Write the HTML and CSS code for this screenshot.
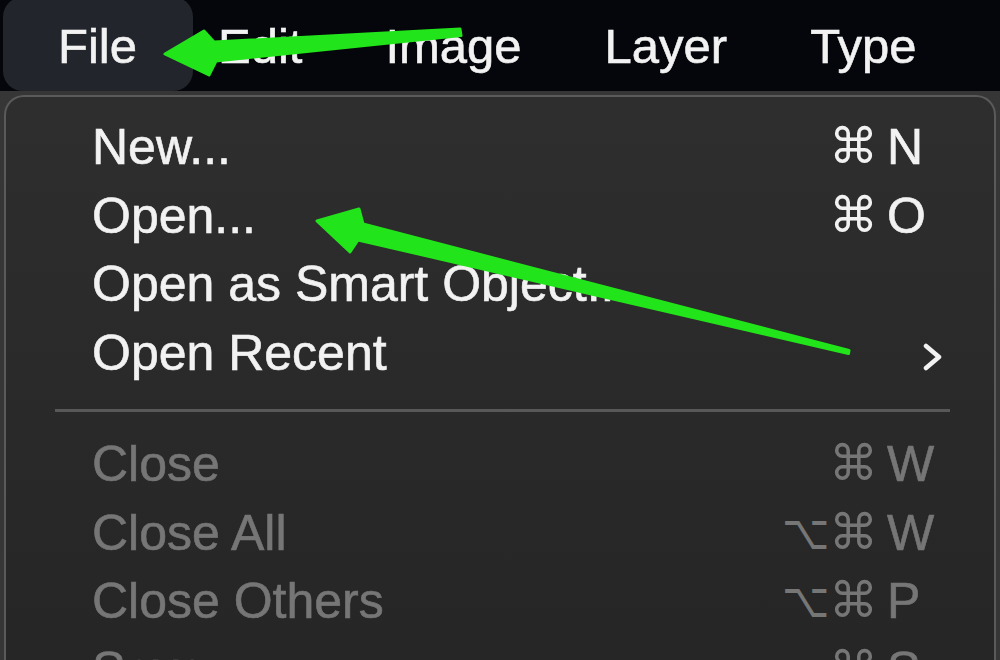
FILE: index.html
```html
<!DOCTYPE html>
<html lang="en">
<head>
<meta charset="utf-8">
<title>File menu</title>
<link rel="stylesheet" href="styles.css">
</head>
<body>
<div class="screen">
  <nav class="menubar">
    <span class="menu-title active">File</span>
    <span class="menu-title">Edit</span>
    <span class="menu-title">Image</span>
    <span class="menu-title">Layer</span>
    <span class="menu-title">Type</span>
  </nav>
  <div class="dropdown">
    <div class="item"><span class="label">New...</span><span class="mods">⌘</span><span class="key">N</span></div>
    <div class="item"><span class="label">Open...</span><span class="mods">⌘</span><span class="key">O</span></div>
    <div class="item"><span class="label">Open as Smart Object...</span><span class="mods"></span><span class="key"></span></div>
    <div class="item"><span class="label">Open Recent</span><span class="mods"></span><span class="key"><svg class="chevron" width="20" height="28" viewBox="0 0 20 28"><polyline points="3,3 16,14 3,25" fill="none" stroke="#f2f2f2" stroke-width="4.5" stroke-linecap="round" stroke-linejoin="round"/></svg></span></div>
    <div class="separator"></div>
    <div class="item disabled"><span class="label">Close</span><span class="mods">⌘</span><span class="key">W</span></div>
    <div class="item disabled"><span class="label">Close All</span><span class="mods"><span class="opt">⌥</span>⌘</span><span class="key">W</span></div>
    <div class="item disabled"><span class="label">Close Others</span><span class="mods"><span class="opt">⌥</span>⌘</span><span class="key">P</span></div>
    <div class="item disabled"><span class="label">Save</span><span class="mods">⌘</span><span class="key">S</span></div>
  </div>
  <svg class="annotations" width="1000" height="660" viewBox="0 0 1000 660">
    <polygon points="165,54 204,31 214,42 460,29 461,35.5 216,61 209,75" fill="#22e41a" stroke="#22e41a" stroke-width="3" stroke-linejoin="round"/>
    <polygon points="317,221 359,209 363,224 849,350.5 848.5,353.5 358,240 350,252" fill="#22e41a" stroke="#22e41a" stroke-width="3" stroke-linejoin="round"/>
  </svg>
</div>
</body>
</html>
```
FILE: styles.css
```css
html, body {
  margin: 0;
  padding: 0;
}
body {
  background: #3a3a3a;
  font-family: "Liberation Sans", Arial, sans-serif;
  overflow: hidden;
}
.screen {
  position: relative;
  width: 1000px;
  height: 660px;
  overflow: hidden;
  background: #363636;
}
.menubar {
  display: flex;
  align-items: stretch;
  height: 91px;
  background: #05060b;
  padding-left: 3px;
}
.menu-title {
  font-size: 49px;
  line-height: 92px;
  color: #f2f2f2;
  margin-left: 83px;
  -webkit-text-stroke: 0.6px #f2f2f2;
}
.menu-title.active {
  margin-left: 0;
  padding: 0 56px 0 55px;
  background: #23252d;
  border-radius: 20px;
  margin-top: -3px;
  line-height: 98px;
}
.menu-title.active + .menu-title {
  margin-left: 25px;
}
.dropdown {
  margin: 4px 4px 0 4px;
  border: 2px solid #5a5a5a;
  border-bottom: none;
  border-radius: 20px 20px 0 0;
  background: linear-gradient(#2e2e2e, #252525);
  padding-top: 16px;
  height: 600px;
}
.item {
  display: flex;
  align-items: center;
  height: 68.5px;
  line-height: 68.5px;
  padding-left: 86px;
  font-size: 50px;
  color: #f2f2f2;
  -webkit-text-stroke: 0.6px #f2f2f2;
}
.item.disabled {
  color: #767676;
  -webkit-text-stroke: 0.6px #767676;
}
.label {
  flex: 1;
  white-space: nowrap;
}
.mods {
  font-family: "DejaVu Sans", sans-serif;
  font-size: 49px;
  text-align: right;
  white-space: nowrap;
  -webkit-text-stroke: 0;
}
.opt {
  display: inline-block;
  transform: scaleX(0.84);
  transform-origin: right center;
}
.key {
  width: 107px;
  margin-left: 9px;
  display: flex;
  align-items: center;
}
.chevron {
  margin-left: 36px;
  margin-top: 8px;
}
.separator {
  height: 3px;
  background: #585858;
  margin: 22px 44px 18px 49px;
}
.annotations {
  position: absolute;
  left: 0;
  top: 0;
  pointer-events: none;
}
```
